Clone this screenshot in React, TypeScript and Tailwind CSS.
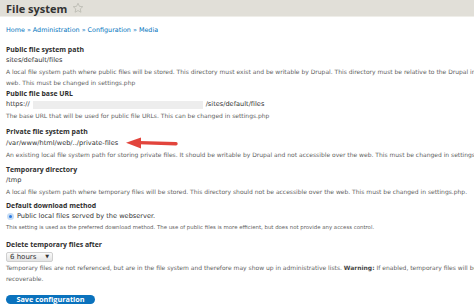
const font = { fontFamily: '"DejaVu Sans", "Liberation Sans", sans-serif' }
const boldFont = { fontFamily: '"Open Sans", "DejaVu Sans", sans-serif' }

function Label({ children, className = '' }: { children: React.ReactNode; className?: string }) {
  return (
    <div className={`whitespace-nowrap text-[6.9px] font-bold leading-[11px] text-[#2e2e2e] ${className}`} style={boldFont}>
      {children}
    </div>
  )
}

function Value({ children }: { children: React.ReactNode }) {
  return <div className="whitespace-nowrap text-[6.6px] leading-[11px] text-[#333]">{children}</div>
}

function Desc({ children }: { children: React.ReactNode }) {
  return <div className="whitespace-nowrap text-[6px] leading-[11px] text-[#5f5f5f]">{children}</div>
}

function Star() {
  return (
    <svg width="12" height="12" viewBox="0 0 24 24" fill="none" stroke="#b9b9b0" strokeWidth="1.6" strokeLinejoin="round">
      <path d="M12 2.5l2.9 6.2 6.6.7-5 4.5 1.4 6.6L12 17.1l-5.9 3.4 1.4-6.6-5-4.5 6.6-.7z" />
    </svg>
  )
}

function Arrow() {
  return (
    <svg width="54" height="12" viewBox="0 0 54 12" className="ml-[7px]">
      <path d="M51 6.8L14 5.6" stroke="#e2443c" strokeWidth="3.4" strokeLinecap="round" />
      <path d="M1 5.8L16 0.5v11z" fill="#e2443c" />
    </svg>
  )
}

export default function App() {
  return (
    <div className="h-[308px] w-[474px] overflow-hidden bg-white" style={font}>
      <div className="flex h-[17px] items-center gap-[5px] border-b border-[#efeee9] bg-[#e1dfd8] px-[6px]">
        <h1 className="text-[11px] font-bold leading-none text-[#333]" style={boldFont}>File system</h1>
        <Star />
      </div>

      <div className="w-[520px] px-[6px]">
        <div className="mt-[8px] whitespace-nowrap text-[6.4px] leading-[11px] text-[#0074bd]">
          Home » Administration » Configuration » Media
        </div>

        <Label className="mt-[8px]">Public file system path</Label>
        <Value>sites/default/files</Value>
        <Desc>A local file system path where public files will be stored. This directory must exist and be writable by Drupal. This directory must be relative to the Drupal installation directory and be accessible over the</Desc>
        <Desc>web. This must be changed in settings.php</Desc>

        <Label>Public file base URL</Label>
        <div className="flex items-center whitespace-nowrap text-[6.6px] leading-[11px] text-[#333]">
          <span>https://</span>
          <span className="mx-[3px] h-[8px] w-[170px] bg-[#ededed]" />
          <span>/sites/default/files</span>
        </div>
        <Desc>The base URL that will be used for public file URLs. This can be changed in settings.php</Desc>

        <Label className="mt-[5px]">Private file system path</Label>
        <div className="flex items-center">
          <Value>/var/www/html/web/../private-files</Value>
          <Arrow />
        </div>
        <Desc>An existing local file system path for storing private files. It should be writable by Drupal and not accessible over the web. This must be changed in settings.php</Desc>

        <Label className="mt-[4px]">Temporary directory</Label>
        <Value>/tmp</Value>
        <Desc>A local file system path where temporary files will be stored. This directory should not be accessible over the web. This must be changed in settings.php.</Desc>

        <Label className="mt-[3px]">Default download method</Label>
        <div className="flex items-center gap-[3px]">
          <span className="ml-[1px] h-[7px] w-[7px] rounded-full border-[2px] border-[#c6dcf4] bg-[#2a7ae2]" />
          <Value>Public local files served by the webserver.</Value>
        </div>
        <div className="whitespace-nowrap text-[5.4px] leading-[11px] text-[#5f5f5f]">
          This setting is used as the preferred download method. The use of public files is more efficient, but does not provide any access control.
        </div>

        <Label className="mt-[6px]">Delete temporary files after</Label>
        <div className="mt-[2px] flex h-[10px] w-[47px] items-center justify-between rounded-[2px] border border-[#cfcfcf] bg-gradient-to-b from-[#fafafa] to-[#e4e4e4] px-[3px] text-[7px] text-[#333]">
          <span>6 hours</span>
          <span className="text-[5px]">▼</span>
        </div>
        <Desc>
          Temporary files are not referenced, but are in the file system and therefore may show up in administrative lists. <b className="text-[#444]">Warning:</b> If enabled, temporary files will be
        </Desc>
        <Desc>recoverable.</Desc>

        <button className="mt-[11px] flex h-[9px] w-[89px] items-center justify-center rounded-full bg-[#0a72bd] text-[7.3px] font-bold leading-none text-white" style={boldFont}>
          Save configuration
        </button>
      </div>
    </div>
  )
}
